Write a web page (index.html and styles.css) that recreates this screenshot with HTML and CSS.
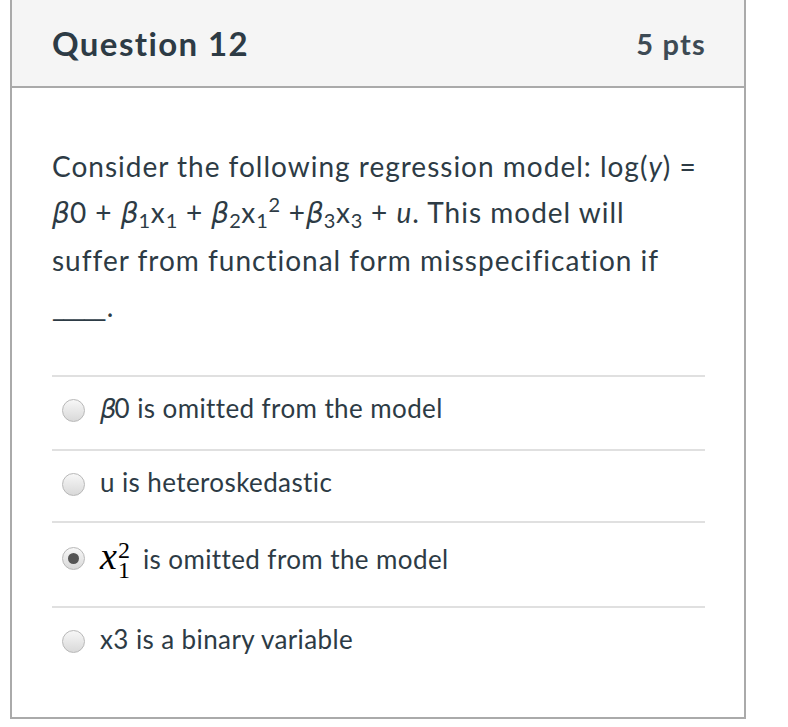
FILE: index.html
```html
<!DOCTYPE html>
<html>
<head>
<meta charset="utf-8">
<link rel="stylesheet" href="styles.css">
</head>
<body>
<div class="question">
  <div class="header">
    <h2 class="title">Question 12</h2>
    <div class="pts">5 pts</div>
  </div>
  <div class="body">
    <p class="text">Consider the following regression model: log(<i>y</i>) = <span class="beta">β</span>0 + <span class="beta">β</span><sub>1</sub>x<sub>1</sub> + <span class="beta">β</span><sub>2</sub>x<sub>1</sub><sup>2</sup> +<span class="beta">β</span><sub>3</sub>x<sub>3</sub> + <i>u</i>. This model will suffer from functional form misspecification if <span class="blank">_____</span>.</p>
    <div class="answers">
      <div class="answer first"><span class="radio"></span><span class="label"><span class="beta small">β</span>0 is omitted from the model</span></div>
      <div class="answer"><span class="radio"></span><span class="label">u is heteroskedastic</span></div>
      <div class="answer tall"><span class="radio checked"></span><span class="label"><span class="math"><span class="mx">x</span><span class="scripts"><span class="sup">2</span><span class="sub">1</span></span></span> is omitted from the model</span></div>
      <div class="answer"><span class="radio"></span><span class="label">x3 is a binary variable</span></div>
    </div>
  </div>
</div>
</body>
</html>
```
FILE: styles.css
```css
html, body {
  margin: 0;
  padding: 0;
  background: #fff;
}
body {
  font-family: Lato, "Liberation Sans", sans-serif;
  color: #2d3b45;
}
.question {
  margin-left: 10px;
  width: 736px;
  border: 2px solid #aaaaaa;
  border-top: none;
  height: 719px;
  box-sizing: border-box;
}
.header {
  background: #f5f5f5;
  height: 86px;
  border-bottom: 2px solid #aaaaaa;
  display: flex;
  align-items: center;
  justify-content: space-between;
  padding: 0 38px 0 40px;
}
.title {
  margin: 0;
  font-size: 33px;
  font-weight: bold;
  letter-spacing: 1.4px;
}
.pts {
  font-size: 29px;
  font-weight: bold;
  color: #3d4a54;
  letter-spacing: 1.2px;
}
.body {
  padding: 0 39px 0 40px;
}
.text {
  margin: 55px 0 0 0;
  font-size: 28px;
  line-height: 46px;
  letter-spacing: 1px;
}
.text sub, .text sup {
  font-size: 20px;
  line-height: 0;
  letter-spacing: 0.5px;
}
.text sub { vertical-align: -5px; }
.text sup { vertical-align: 11px; }
.beta {
  font-family: "DejaVu Sans", sans-serif;
  font-style: italic;
  font-weight: normal;
  letter-spacing: 0;
}
.beta.small {
  letter-spacing: -2px;
}
.blank {
  letter-spacing: -2.5px;
  margin-right: 3px;
}
.answers {
  margin-top: 46px;
}
.answer {
  border-top: 2px solid #e0e0e0;
  padding: 15px 0 19px 0;
  line-height: 36px;
  display: flex;
  align-items: center;
  font-size: 26px;
  letter-spacing: 0.4px;
}
.answer.first {
  padding-bottom: 20px;
}
.answer.tall {
  padding-bottom: 27px;
}
.radio {
  width: 21px;
  height: 21px;
  border-radius: 50%;
  border: 1px solid #b8b8b8;
  background: linear-gradient(#f7f7f7, #d9d9d9);
  margin-left: 10px;
  margin-right: 15px;
  flex: none;
  position: relative;
}
.radio.checked::after {
  content: "";
  position: absolute;
  left: 5px;
  top: 5px;
  width: 11px;
  height: 11px;
  border-radius: 50%;
  background: #555;
}
.label {
  position: relative;
  top: -2px;
}
.math {
  display: inline-flex;
  align-items: center;
  font-family: "Liberation Serif", "DejaVu Serif", serif;
  color: #000;
  margin-right: 6px;
  letter-spacing: 0;
}
.mx {
  font-style: italic;
  font-size: 38px;
  line-height: 36px;
}
.scripts {
  display: inline-flex;
  flex-direction: column;
  font-size: 24px;
  line-height: 20px;
  margin-left: 1px;
  position: relative;
  top: 4px;
}
```
